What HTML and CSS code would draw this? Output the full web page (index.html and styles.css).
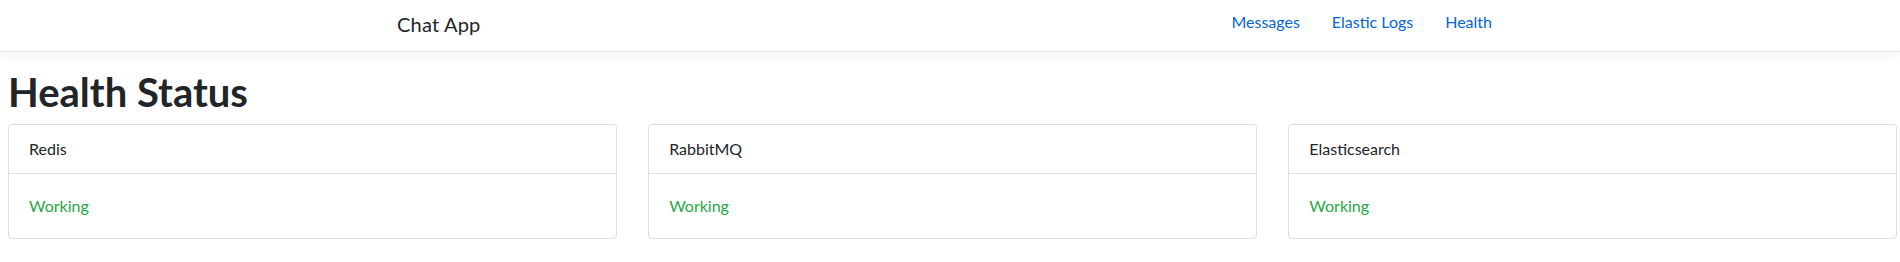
FILE: index.html
```html
<!DOCTYPE html>
<html lang="en">
<head>
<meta charset="utf-8">
<title>Health Status - Chat App</title>
<link rel="stylesheet" href="styles.css">
</head>
<body>
<header class="navbar">
  <div class="nav-inner">
    <a class="brand" href="#">Chat App</a>
    <ul class="nav-links">
      <li><a class="nav-link" href="#">Messages</a></li>
      <li><a class="nav-link" href="#">Elastic Logs</a></li>
      <li><a class="nav-link" href="#">Health</a></li>
    </ul>
  </div>
</header>
<main class="page">
  <h1 class="title">Health Status</h1>
  <div class="cards">
    <section class="card">
      <div class="card-header">Redis</div>
      <div class="card-body status-ok">Working</div>
    </section>
    <section class="card">
      <div class="card-header">RabbitMQ</div>
      <div class="card-body status-ok">Working</div>
    </section>
    <section class="card">
      <div class="card-header">Elasticsearch</div>
      <div class="card-body status-ok">Working</div>
    </section>
  </div>
</main>
</body>
</html>
```
FILE: styles.css
```css
* { box-sizing: border-box; }

html, body {
  margin: 0;
  padding: 0;
  background: #fff;
}

body {
  font-family: Lato, "Open Sans", "Liberation Sans", sans-serif;
  font-size: 16px;
  line-height: 24px;
  color: #212529;
}

.navbar {
  height: 52px;
  background: #fff;
  border-bottom: 1px solid #e5e5e5;
  box-shadow: 0 4px 12px rgba(0, 0, 0, 0.05);
  margin-bottom: 16px;
}

.nav-inner {
  display: flex;
  justify-content: space-between;
  align-items: flex-start;
  padding: 0 392px 0 397px;
  height: 51px;
}

.brand {
  font-size: 20px;
  line-height: 30px;
  padding-top: 9px;
  letter-spacing: 0.2px;
  color: #212529;
  text-decoration: none;
}

.nav-links {
  display: flex;
  list-style: none;
  margin: 0;
  padding: 10px 0 0 0;
}

.nav-link {
  display: block;
  padding: 0 16px;
  line-height: 24px;
  color: #0366d6;
  text-decoration: none;
}

.page {
  padding: 0 3px 0 8px;
}

.title {
  margin: 0 0 8px 0;
  font-size: 40px;
  line-height: 48px;
  font-weight: 700;
}

.cards {
  display: grid;
  grid-template-columns: repeat(3, 1fr);
  gap: 31.5px;
}

.card {
  border: 1px solid #dfdfdf;
  border-radius: 4px;
  background: #fff;
}

.card-header {
  padding: 12px 20px;
  border-bottom: 1px solid #dfdfdf;
}

.card-body {
  padding: 20px;
}

.status-ok {
  color: #28a745;
}
```
